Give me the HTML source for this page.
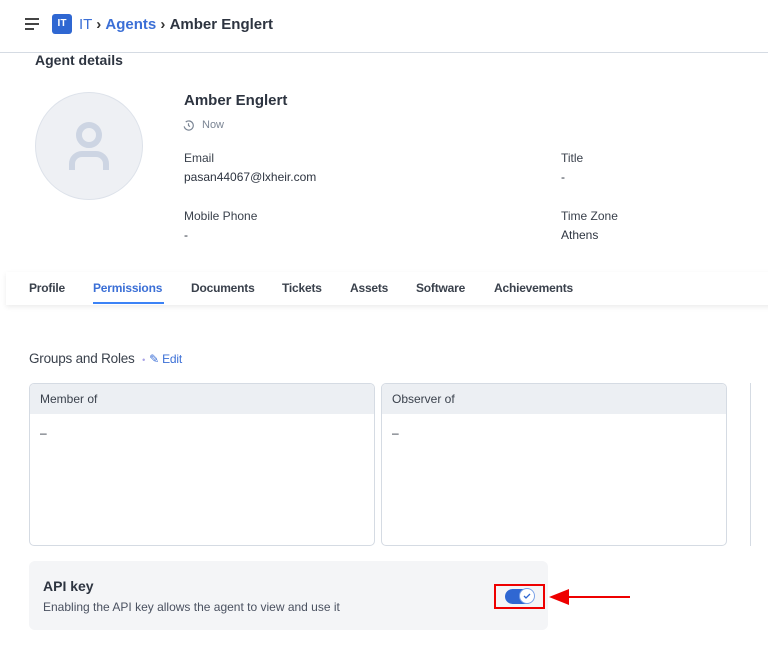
<!DOCTYPE html>
<html><head><meta charset="utf-8"><style>
*{box-sizing:border-box;margin:0;padding:0}
body{width:768px;height:669px;background:#fff;font-family:"Liberation Sans",sans-serif;color:#2d3440;position:relative;overflow:hidden}
.a{position:absolute}
</style></head><body>
<div class="a" style="left:0;top:52px;width:768px;height:1px;background:#d5dbe3"></div>
<div class="a" style="left:25px;top:18px;width:14px;height:2px;background:#444"></div>
<div class="a" style="left:25px;top:23px;width:14px;height:2px;background:#444"></div>
<div class="a" style="left:25px;top:28px;width:9px;height:2px;background:#444"></div>
<div class="a" style="left:52px;top:14px;width:20px;height:20px;background:#2f67d2;border-radius:3px;color:#fff;font-size:10px;font-weight:bold;text-align:center;line-height:20px">IT</div>
<div class="a" style="left:79px;top:16px;font-size:15px;line-height:18px;white-space:nowrap"><span style="color:#3b6fd6">IT</span> <b style="color:#333">›</b> <span style="color:#3b6fd6;font-weight:bold">Agents</span> <b style="color:#333">›</b> <b style="color:#2d3440">Amber Englert</b></div>
<div class="a" style="left:35px;top:51px;font-size:14px;font-weight:bold;line-height:18px">Agent details</div>
<div class="a" style="left:35px;top:92px;width:108px;height:108px;border-radius:50%;background:#eef0f4;border:1px solid #dde2ea"></div>
<svg class="a" style="left:66px;top:120px" width="46" height="52" viewBox="0 0 46 52"><circle cx="23" cy="15" r="10" fill="none" stroke="#cdd5e3" stroke-width="6"/><path d="M6 50V44a10 10 0 0 1 10-10h14a10 10 0 0 1 10 10v6" fill="none" stroke="#cdd5e3" stroke-width="6"/></svg>
<div class="a" style="left:184px;top:92px;font-size:15px;font-weight:bold;line-height:18px">Amber Englert</div>
<svg class="a" style="left:183px;top:120px" width="11" height="11" viewBox="0 0 12 12"><path d="M3 2.2A5 5 0 1 1 1.3 7" fill="none" stroke="#7b8594" stroke-width="1.3"/><path d="M6 3.5V6l1.6 1.2" fill="none" stroke="#7b8594" stroke-width="1.3"/></svg>
<div class="a" style="left:202px;top:119px;font-size:11px;color:#7b8594">Now</div>
<div class="a" style="left:184px;top:151px;font-size:12px;line-height:14px;color:#3a414c">Email</div>
<div class="a" style="left:184px;top:170px;font-size:12px;line-height:14px;color:#2d3440">pasan44067@lxheir.com</div>
<div class="a" style="left:184px;top:209px;font-size:12px;line-height:14px;color:#3a414c">Mobile Phone</div>
<div class="a" style="left:184px;top:228px;font-size:12px;line-height:14px">-</div>
<div class="a" style="left:561px;top:151px;font-size:12px;line-height:14px;color:#3a414c">Title</div>
<div class="a" style="left:561px;top:170px;font-size:12px;line-height:14px">-</div>
<div class="a" style="left:561px;top:209px;font-size:12px;line-height:14px;color:#3a414c">Time Zone</div>
<div class="a" style="left:561px;top:228px;font-size:12px;line-height:14px">Athens</div>
<div class="a" style="left:6px;top:272px;width:770px;height:33px;background:#fff;box-shadow:0 2px 5px rgba(0,0,0,.08)"></div>
<div class="a" style="left:29px;top:281px;font-size:12px;font-weight:bold;line-height:14px;color:#3a414c;white-space:nowrap;letter-spacing:-0.2px">
<span style="position:absolute;left:0">Profile</span>
<span style="position:absolute;left:64px;color:#3b6fd6">Permissions</span>
<span style="position:absolute;left:162px">Documents</span>
<span style="position:absolute;left:253px">Tickets</span>
<span style="position:absolute;left:321px">Assets</span>
<span style="position:absolute;left:387px">Software</span>
<span style="position:absolute;left:465px">Achievements</span></div>
<div class="a" style="left:93px;top:302px;width:71px;height:2px;background:#3b82f6"></div>
<div class="a" style="left:29px;top:351px;font-size:13.5px;line-height:15px;color:#3a414c;white-space:nowrap;letter-spacing:-0.2px">Groups and Roles <span style="color:#a9a2e6;font-size:9px;margin:0 4px">•</span><span style="color:#3b6fd6;font-size:12px">✎ Edit</span></div>
<div class="a" style="left:29px;top:383px;width:346px;height:163px;border:1px solid #d5dbe3;border-radius:5px;overflow:hidden"><div style="height:30px;background:#eceff3;font-size:12px;line-height:30px;padding-left:10px;color:#3a414c">Member of</div><div style="padding:12px 10px;font-size:12px">–</div></div>
<div class="a" style="left:381px;top:383px;width:346px;height:163px;border:1px solid #d5dbe3;border-radius:5px;overflow:hidden"><div style="height:30px;background:#eceff3;font-size:12px;line-height:30px;padding-left:10px;color:#3a414c">Observer of</div><div style="padding:12px 10px;font-size:12px">–</div></div>
<div class="a" style="left:750px;top:383px;width:1px;height:163px;background:#d5dbe3"></div>
<div class="a" style="left:29px;top:561px;width:519px;height:69px;background:#f4f5f7;border-radius:6px"></div>
<div class="a" style="left:43px;top:578px;font-size:14px;font-weight:bold;line-height:16px">API key</div>
<div class="a" style="left:43px;top:600px;font-size:12px;line-height:14px;color:#4a5160">Enabling the API key allows the agent to view and use it</div>
<div class="a" style="left:494px;top:584px;width:51px;height:25px;border:2px solid #e00"></div>
<div class="a" style="left:505px;top:589px;width:29px;height:15px;border-radius:8px;background:#2f67d2"></div>
<div class="a" style="left:519px;top:588px;width:16px;height:16px;border-radius:50%;background:#fff;border:1px solid #7aa2e8"></div>
<svg class="a" style="left:523px;top:593px" width="8" height="6" viewBox="0 0 8 6"><path d="M1 3l2 2 4-4" fill="none" stroke="#2f67d2" stroke-width="1.3"/></svg>
<div class="a" style="left:565px;top:596px;width:65px;height:2px;background:#e00"></div>
<svg class="a" style="left:549px;top:589px" width="20" height="16"><path d="M0 8L20 0V16Z" fill="#e00"/></svg>
</body></html>
